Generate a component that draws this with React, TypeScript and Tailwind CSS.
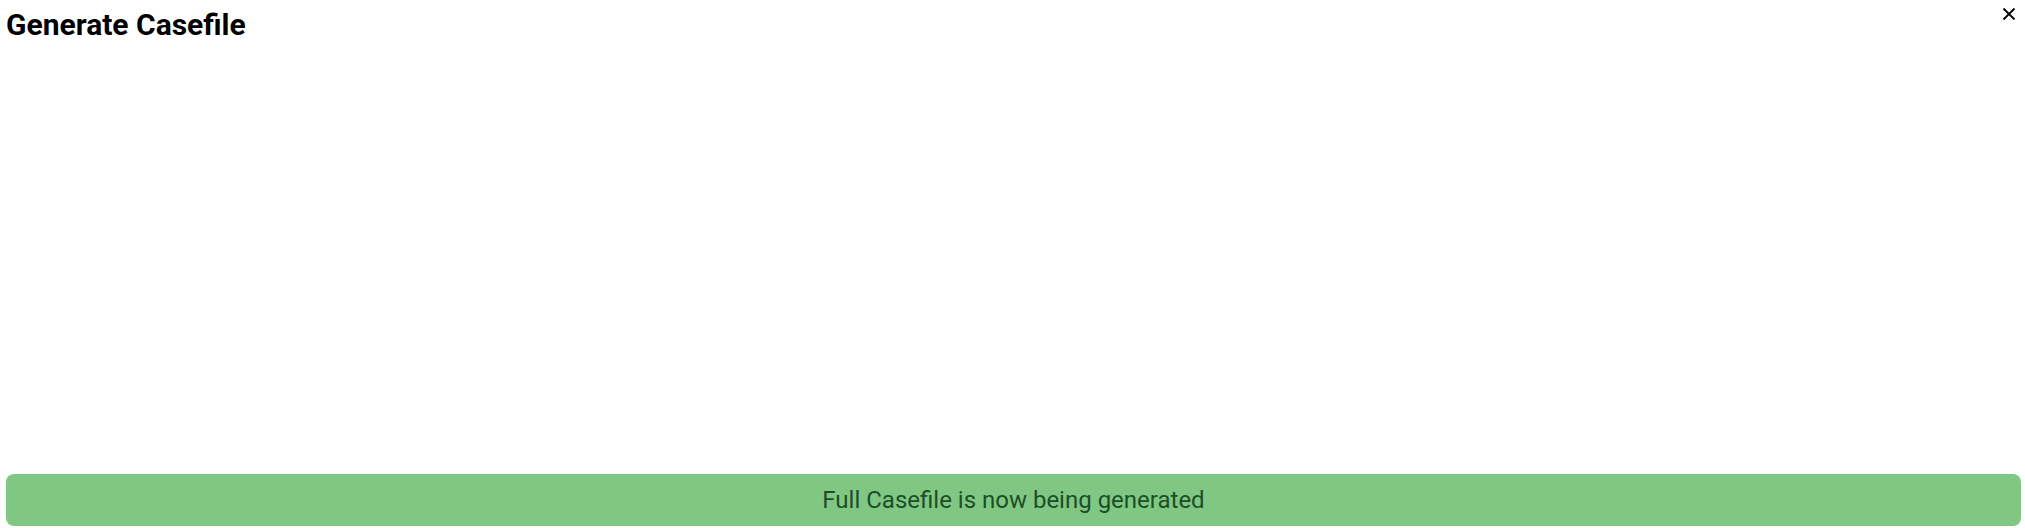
import React from "react";

export default function App() {
  return (
    <div className="relative flex h-[528px] w-[2025px] flex-col bg-white font-['Roboto',sans-serif]">
      <div className="flex items-start justify-between pl-[6px] pr-[9px] pt-[5px]">
        <h1 className="text-[30px] font-bold leading-[40px] text-black">Generate Casefile</h1>
        <button className="mt-[3px] flex items-center justify-center text-black">
          <svg width="14" height="12" viewBox="0 0 14 12" fill="none" stroke="black" strokeWidth="1.9">
            <path d="M1.5 0.5 L12.5 11.5 M12.5 0.5 L1.5 11.5" />
          </svg>
        </button>
      </div>
      <div className="flex-1" />
      <div className="mb-[2px] ml-[6px] mr-[4px] flex h-[52px] items-center justify-center rounded-[8px] bg-[#81c784]">
        <span className="text-[24px] text-[#1b4f26]">Full Casefile is now being generated</span>
      </div>
    </div>
  );
}
